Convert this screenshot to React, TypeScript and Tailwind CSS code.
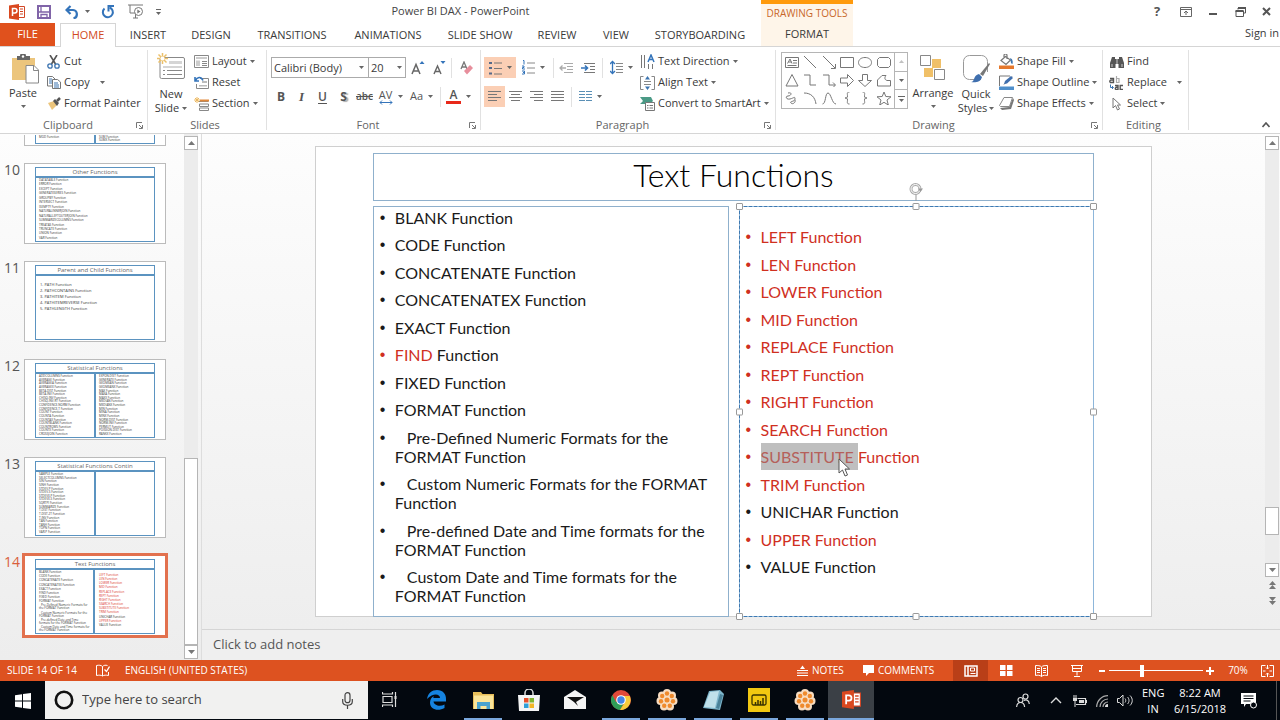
import React from "react";

type Kids = { children?: React.ReactNode };

function Icon({ w, h, vb, children, className = "" }: Kids & { w: number; h: number; vb?: string; className?: string }) {
  return (
    <svg width={w} height={h} viewBox={vb ?? `0 0 ${w} ${h}`} fill="none" aria-hidden="true" className={`block shrink-0 ${className}`}>
      {children}
    </svg>
  );
}

const Caret = ({ className = "" }: { className?: string }) => (
  <Icon w={5} h={3} className={className}>
    <path d="M0 0h5L2.500 3z" fill="#666" />
  </Icon>
);

const Rule = () => <span className="h-5 w-px shrink-0 bg-[#e1e1e1]" />;

/* ---------- title bar and tabs ---------- */

const PptMark = ({ size }: { size: number }) => (
  <Icon w={size} h={size} vb="0 0 16 16">
    <path d="M9 2.500h6.500v11H9z" fill="#fff" stroke="#d24726" />
    <path d="M11 5h3M11 7.500h3M11 10h3" stroke="#d24726" strokeWidth="1.200" />
    <path d="M0 1.500 10 0v16L0 14.500z" fill="#d9481f" />
    <path d="M3.500 12V4.500h2.300a2.200 2.200 0 0 1 0 4.400H3.500" stroke="#fff" strokeWidth="1.500" />
  </Icon>
);

function TitleBar() {
  return (
    <div className="flex h-[23px] items-center">
      <div className="flex w-[160px] shrink-0 items-center pl-[9px]">
        <PptMark size={16} />
        <button aria-label="Save" className="ml-3">
          <Icon w={14} h={14}>
            <path d="M1 1h12v12H1z" stroke="#8064a8" strokeWidth="2" />
            <path d="M1 7h12M4 13V9.500h6V13M4 1v6" stroke="#8064a8" strokeWidth="1.300" />
          </Icon>
        </button>
        <button aria-label="Undo" className="ml-[14px]">
          <Icon w={14} h={14}>
            <path d="M5.500 1 1.500 5l4 4M2 5h6a4.200 4.200 0 0 1 .5 8.300" stroke="#3474ba" strokeWidth="2.200" />
          </Icon>
        </button>
        <Caret className="ml-[6px]" />
        <button aria-label="Repeat" className="ml-[11px]">
          <Icon w={14} h={14}>
            <path d="M8.500 2.500A5 5 0 1 1 3.500 3.500" stroke="#3474ba" strokeWidth="2" />
            <path d="M7.500 6.500V1H13" stroke="#3474ba" strokeWidth="2" />
          </Icon>
        </button>
        <button aria-label="Start slide show" className="ml-[13px]">
          <Icon w={16} h={15}>
            <path d="M0 1h15M2 1v8h6M5 14h5M7.500 9v5" stroke="#777" />
            <circle cx="10.500" cy="7.500" r="4" stroke="#777" fill="#fff" />
            <path d="M9.300 5.500v4l3.200-2z" fill="#777" />
          </Icon>
        </button>
        <Icon w={5} h={6} className="ml-3">
          <path d="M0 .5h5" stroke="#666" />
          <path d="M0 3h5L2.500 6z" fill="#666" />
        </Icon>
      </div>
      <h1 className="min-w-0 flex-1 text-center text-[11px] text-[#444]">Power BI DAX - PowerPoint</h1>
      <div className="mr-[298px] flex h-full w-[92px] shrink-0 items-center justify-center border-t-4 border-[#ff9a0c] bg-[#fef5e9] text-[10px] whitespace-nowrap text-[#c8672a]">
        DRAWING TOOLS
      </div>
      <div className="flex w-[129px] shrink-0 items-center justify-between pr-[9px]">
        <button aria-label="Help" className="w-3 text-[13px] font-bold text-[#555]">?</button>
        <button aria-label="Ribbon display options">
          <Icon w={12} h={10}>
            <path d="M.5.5h11v9H.5zM.5 2.500h11" stroke="#666" />
            <path d="M6 8V4M4 6l2-2 2 2" stroke="#666" />
          </Icon>
        </button>
        <button aria-label="Minimize">
          <Icon w={10} h={10}>
            <path d="M1 7h8" stroke="#555" strokeWidth="2" />
          </Icon>
        </button>
        <button aria-label="Restore">
          <Icon w={11} h={10}>
            <path d="M3 2.500V1h7.500v5H9M1 4h7.500v5.500H1z" stroke="#555" />
            <path d="M3 1h8M.5 4h8" stroke="#555" strokeWidth="2" />
          </Icon>
        </button>
        <button aria-label="Close">
          <Icon w={9} h={9}>
            <path d="m1 1 7 7M8 1 1 8" stroke="#555" strokeWidth="2" />
          </Icon>
        </button>
      </div>
    </div>
  );
}

const TABS = [
  { name: "INSERT", w: "w-16" },
  { name: "DESIGN", w: "w-[62px]" },
  { name: "TRANSITIONS", w: "w-[100px]" },
  { name: "ANIMATIONS", w: "w-[92px]" },
  { name: "SLIDE SHOW", w: "w-[92px]" },
  { name: "REVIEW", w: "w-[62px]" },
  { name: "VIEW", w: "w-14" },
  { name: "STORYBOARDING", w: "w-[112px]" },
];

function Tabs() {
  return (
    <nav className="flex h-6 border-b border-[#d5d5d5] text-[11px] text-[#3a3a3a]">
      <button className="h-[23px] w-[55px] bg-[#e0511d] text-white">FILE</button>
      <button className="ml-[5px] h-6 w-14 border border-b-0 border-[#d5d5d5] bg-white text-[#d24a22]">HOME</button>
      {TABS.map((t) => (
        <button key={t.name} className={`h-6 ${t.w}`}>{t.name}</button>
      ))}
      <button className="ml-[5px] h-[23px] w-[92px] bg-[#fef5e9]">FORMAT</button>
      <a href="#sign-in" className="ml-auto pr-px leading-[20px] whitespace-nowrap">Sign in</a>
    </nav>
  );
}

/* ---------- ribbon ---------- */

function Group({ label, w, launcher, children }: Kids & { label: string; w: string; launcher?: boolean }) {
  return (
    <section aria-label={label} className={`flex h-full shrink-0 ${w}`}>
      <div className="flex min-w-0 flex-1 flex-col">
        <div className="flex h-[71px] pt-1">{children}</div>
        <div className="flex h-[15px] items-center pr-1 text-[11px] text-[#666]">
          <span className="flex-1 text-center">{label}</span>
          {launcher && (
            <Icon w={7} h={7}>
              <path d="M.5 6V.5H6M3 3l3 3M6.500 3v3.500H3" stroke="#777" />
            </Icon>
          )}
        </div>
      </div>
      <span className="my-[3px] w-px bg-[#e1e1e1]" />
    </section>
  );
}

function Row({ icon, label, caret, far }: { icon: React.ReactNode; label: string; caret?: boolean; far?: boolean }) {
  return (
    <button className="flex h-[21px] items-center gap-[3px] whitespace-nowrap">
      <span className="flex w-[15px] justify-center">{icon}</span>
      <span>{label}</span>
      {caret && <Caret className={far ? "ml-[7px]" : ""} />}
    </button>
  );
}

function Clipboard() {
  return (
    <Group label="Clipboard" w="w-[148px]" launcher>
      <button className="flex w-[46px] flex-col items-center">
        <Icon w={27} h={30} className="mt-[3px] ml-1">
          <path d="M0 4h23v22H0z" fill="#ecc57c" />
          <path d="M5 2h3a3 3 0 0 1 6 0h4v4H5z" fill="#666" />
          <circle cx="11" cy="2.500" r="1.200" fill="#fff" />
          <path d="M14 11.500h8l4.500 4.500v13H14z" fill="#fff" stroke="#888" />
          <path d="M21.500 11.500v5h5" stroke="#888" />
        </Icon>
        <span className="mt-px leading-[16px]">Paste</span>
        <Caret className="mt-1" />
      </button>
      <div className="flex flex-col">
        <Row label="Cut" icon={
          <Icon w={13} h={14}>
            <path d="m3 0 5.500 9M10 0 4.500 9" stroke="#555" strokeWidth="1.600" />
            <circle cx="3" cy="11" r="2.200" stroke="#3c74b0" strokeWidth="1.300" />
            <circle cx="10" cy="11" r="2.200" stroke="#3c74b0" strokeWidth="1.300" />
          </Icon>
        } />
        <Row label="Copy" caret far icon={
          <Icon w={14} h={13}>
            <path d="M.5.5h5L8 3v7H.5z" fill="#fff" stroke="#777" />
            <path d="M2 3h3M2 5h3M2 7h3" stroke="#3c74b0" />
            <path d="M5.500 3.500h5L13.500 6v6.500h-8z" fill="#fff" stroke="#777" />
            <path d="M7 7h4M7 9h5M7 11h5" stroke="#3c74b0" />
          </Icon>
        } />
        <Row label="Format Painter" icon={
          <Icon w={14} h={13}>
            <path d="m1 6 6-2 3 4-5 5z" fill="#ecc57c" />
            <path d="m6 4 2-2 4 4-2 3z" fill="#555" />
            <path d="m10 4 3-3" stroke="#555" strokeWidth="2.500" />
          </Icon>
        } />
      </div>
    </Group>
  );
}

function Slides() {
  return (
    <Group label="Slides" w="w-[119px]">
      <button className="flex w-[46px] flex-col items-center">
        <Icon w={28} h={26} className="mt-[2px]">
          <rect x="3" y="4.500" width="24.500" height="21" rx="1.500" fill="#fff" stroke="#888" />
          <path d="M12 8h13v3H12zM6 13h19v2H6z" fill="#d5d5d5" />
          <path d="M6 17.500h2M10 17.500h15M6 21.500h2M10 21.500h15" stroke="#888" />
          <path d="M5.500 0v11M0 5.500h11M1.500 1.500l8 8M9.500 1.500l-8 8" stroke="#ecc06a" strokeWidth="1.500" />
          <circle cx="5.500" cy="5.500" r="2" fill="#fff" />
        </Icon>
        <span className="mt-2 leading-[14px]">New</span>
        <span className="flex items-center gap-[3px] leading-[14px]">Slide <Caret /></span>
      </button>
      <div className="flex flex-col">
        <Row label="Layout" caret icon={
          <Icon w={15} h={13}>
            <path d="M.5.5h14v12H.5z" stroke="#888" />
            <path d="M2 2h11v2H2zM2 5.500h4v5.500H2z" fill="#ccc" />
            <path d="M8 6.500h5M8 8.500h5M8 10.500h5" stroke="#888" />
          </Icon>
        } />
        <Row label="Reset" icon={
          <Icon w={15} h={13}>
            <path d="M6 2.500h8.500v10h-12V8" stroke="#888" />
            <path d="M8 5h5v2H8zM5 9h8v1.500H5z" fill="#bbb" />
            <path d="M1 1v4h4M1.500 4.500C3 1 7 0 9 4.500" stroke="#3474ba" strokeWidth="1.600" />
          </Icon>
        } />
        <Row label="Section" caret icon={
          <Icon w={15} h={14}>
            <path d="M5 4.500h9.500M5.500 7h9v2.500h-9zM5.500 11h9v2.500h-9z" stroke="#888" />
            <path d="M6 3.500h9" stroke="#e0883a" strokeWidth="2" />
            <path d="M3 0v6M0 3h6M1 1l4 4M5 1 1 5" stroke="#ecb860" />
          </Icon>
        } />
      </div>
    </Group>
  );
}

function Cell({ w = "w-[21px]", on, label, children }: Kids & { w?: string; on?: boolean; label: string }) {
  return (
    <button aria-label={label} className={`flex h-[21px] shrink-0 items-center justify-center gap-[5px] ${w} ${on ? "bg-[#fbcfb5]" : ""}`}>
      {children}
    </button>
  );
}

function FontGroup() {
  return (
    <Group label="Font" w="w-[214px]" launcher>
      <div className="flex flex-col gap-2 pt-[6px] pl-1">
        <div className="flex h-[21px] items-center">
          <span className="relative flex items-center">
            <select aria-label="Font name" className="h-[21px] w-[98px] appearance-none border border-[#ababab] bg-white pl-[2px] text-[11px] leading-[16px]">
              <option>Calibri (Body)</option>
            </select>
            <Caret className="pointer-events-none absolute right-[5px]" />
          </span>
          <span className="relative -ml-px flex items-center">
            <select aria-label="Font size" className="h-[21px] w-[38px] appearance-none border border-[#ababab] bg-white pl-[2px] text-[11px] leading-[16px]">
              <option>20</option>
            </select>
            <Caret className="pointer-events-none absolute right-1" />
          </span>
          <Cell label="Increase font size" w="w-6">
            <Icon w={14} h={14}>
              <path d="M1 13 5 3.500 9 13M2.500 10h5" stroke="#666" strokeWidth="1.500" />
              <path d="M8.500 3h5L11 0z" fill="#3474ba" />
            </Icon>
          </Cell>
          <Cell label="Decrease font size" w="w-[18px]">
            <Icon w={13} h={14}>
              <path d="M1 13 4.500 5 8 13M2.500 10.500h4" stroke="#666" strokeWidth="1.400" />
              <path d="M7.500 0h5L10 3z" fill="#3474ba" />
            </Icon>
          </Cell>
          <span className="w-[3px]" />
          <Rule />
          <Cell label="Clear formatting" w="w-[29px]">
            <Icon w={13} h={14}>
              <path d="M1 8 4 1l3 7M2 6h4" stroke="#777" strokeWidth="1.300" />
              <path d="m4 10 6-6 3 3-6 6.500z" fill="#e78e9c" />
            </Icon>
          </Cell>
        </div>
        <div className="flex h-[21px] items-center text-[12px] text-[#555]">
          <Cell label="Bold" w="w-5"><b>B</b></Cell>
          <Cell label="Italic"><i className="font-['Liberation_Serif',serif] text-[13px] font-bold">I</i></Cell>
          <Cell label="Underline"><b className="font-semibold underline underline-offset-2">U</b></Cell>
          <Cell label="Text shadow"><b className="text-shadow-[2px_1px_1px_#aaa]">S</b></Cell>
          <Cell label="Strikethrough"><b className="text-[10px] font-semibold line-through">abc</b></Cell>
          <Cell label="Character spacing" w="w-[31px]">
            <span className="flex flex-col items-center">
              <span className="text-[11px] leading-[11px]">AV</span>
              <Icon w={14} h={5}>
                <path d="M1 2.500h12M3 .5l-2 2 2 2M11 .5l2 2-2 2" stroke="#3474ba" />
              </Icon>
            </span>
            <Caret />
          </Cell>
          <Cell label="Change case" w="w-[31px]"><span className="text-[11px]">Aa</span><Caret /></Cell>
          <span className="w-[3px]" />
          <Rule />
          <Cell label="Font color" w="w-[35px]">
            <span className="flex flex-col items-center">
              <span className="text-[12px] leading-[12px] font-semibold">A</span>
              <span className="h-[3px] w-[15px] bg-[#e8291a]" />
            </span>
            <Caret />
          </Cell>
        </div>
      </div>
    </Group>
  );
}

const Lines = ({ d }: { d: string }) => (
  <Icon w={13} h={11}>
    <path d={d} stroke="#777" />
  </Icon>
);

function Paragraph() {
  return (
    <Group label="Paragraph" w="w-[295px]" launcher>
      <div className="flex w-[159px] shrink-0 flex-col gap-2 pt-[6px] pl-[3px]">
        <div className="flex h-[21px] items-center">
          <Cell label="Bullets" w="w-8" on>
            <Icon w={13} h={14}>
              <path d="M5 2h8M5 7.500h8M5 13h8" stroke="#777" />
              <path d="M0 1h3v2H0zM0 6h3v2H0zM0 11.500h3v2H0z" fill="#566a8a" />
            </Icon>
            <Caret />
          </Cell>
          <Cell label="Numbering" w="w-[34px]">
            <Icon w={13} h={15}>
              <path d="M5 3h8M5 8h8M5 13h8" stroke="#888" />
              <path d="M1 .5h1v4M0 6h2v1.500H.5V9H3M0 11h2.500v3H0M1 12.500h1" stroke="#3474ba" />
            </Icon>
            <Caret />
          </Cell>
          <span className="w-[3px]" />
          <Rule />
          <Cell label="Decrease list level" w="w-6">
            <Icon w={14} h={10}>
              <path d="M5 .5h9M8 3.500h6M8 6.500h6M5 9.500h9" stroke="#aaa" />
              <path d="M7 5H1M3.500 2.500 1 5l2.500 2.500" stroke="#aaa" strokeWidth="1.300" />
            </Icon>
          </Cell>
          <Cell label="Increase list level" w="w-5">
            <Icon w={14} h={10}>
              <path d="M3 .5h11M9 3.500h5M9 6.500h5M3 9.500h11" stroke="#777" />
              <path d="M0 5h6M4 2.500 6.500 5 4 7.500" stroke="#3474ba" strokeWidth="1.600" />
            </Icon>
          </Cell>
          <span className="w-1" />
          <Rule />
          <Cell label="Line spacing" w="w-9">
            <Icon w={13} h={15}>
              <path d="M2.500 1v13M0 4l2.500-2.500L5 4M0 11l2.500 2.500L5 11" stroke="#3474ba" strokeWidth="1.300" />
              <path d="M6 3.500h7M6 6.500h7M6 9.500h7M6 12.500h7" stroke="#888" />
            </Icon>
            <Caret />
          </Cell>
        </div>
        <div className="flex h-[21px] items-center">
          <Cell label="Align left" on><Lines d="M0 .5h13M0 3.500h9M0 6.500h13M0 9.500h9" /></Cell>
          <Cell label="Center"><Lines d="M0 .5h13M2 3.500h9M0 6.500h13M2 9.500h9" /></Cell>
          <Cell label="Align right"><Lines d="M0 .5h13M4 3.500h9M0 6.500h13M4 9.500h9" /></Cell>
          <Cell label="Justify"><Lines d="M0 .5h13M0 3.500h13M0 6.500h13M0 9.500h13" /></Cell>
          <span className="w-[3px]" />
          <Rule />
          <Cell label="Columns" w="w-9">
            <Icon w={13} h={11}>
              <path d="M0 .5h6M0 3.500h6M0 6.500h6M0 9.500h6M7 .5h6M7 3.500h6M7 6.500h6M7 9.500h6" stroke="#5a8fb5" />
            </Icon>
            <Caret />
          </Cell>
        </div>
      </div>
      <div className="flex flex-col">
        <Row label="Text Direction" caret icon={
          <Icon w={15} h={15}>
            <path d="M1.500 1v13M4.500 1v13M8.500 10v5M12.500 10v5" stroke="#777" />
            <path d="m8 8 3-7 3 7M9 5.500h4" stroke="#3474ba" strokeWidth="1.500" />
          </Icon>
        } />
        <Row label="Align Text" caret icon={
          <Icon w={15} h={14}>
            <path d="M3.500.5h-3v13h3M11.500.5h3v13h-3M4 5.500h7M4 8.500h7" stroke="#888" />
            <path d="M5 3.500h5L7.500 0zM5 10.500h5L7.500 14z" fill="#3c74b0" />
          </Icon>
        } />
        <Row label="Convert to SmartArt" caret icon={
          <Icon w={15} h={14}>
            <path d="M0 0h11l2 4-3 3H0l3-3z" fill="#4b9a86" />
            <path d="M5.500 5.500h9v8h-9z" fill="#fff" stroke="#777" />
            <path d="M7 8.500h1.500M9.500 8.500H13M7 11h1.500M9.500 11H13" stroke="#777" />
          </Icon>
        } />
      </div>
    </Group>
  );
}

const SHAPES = [
  "M.5 1.500h13v10H.5zM8 4.500h4M8 7h4M2.500 9.500h9M2.500 7.500 5 3l2 4.500M3.500 6h3",
  "m1 0 12 12",
  "m1 0 12 12M13.500 8v4.500H9",
  "M.5 1.500h13v10H.5z",
  "M7 1.500c4 0 6.500 2.300 6.500 5s-2.500 5-6.500 5S.5 9.200.5 6.500 3 1.500 7 1.500z",
  "M2.500 1.500h9l2 2v6l-2 2h-9l-2-2v-6z",
  "M7 .5 13 12H1z",
  "M1 1h6v10h6",
  "M1 1h6v10h6M11 8.500l2.500 2.500-2.500 2.500",
  "M.5 4h7V.5L13.500 6.500l-6 6V9h-7z",
  "M4.500.5h5v6h4l-6.500 6-6.500-6h4z",
  "M.5 12V6L5 1.500h4C7 4 8 6 10 6.500h3.500V12z",
  "M3 1C8 0 6 4 3 4s-2 4 2 3 5-3 5 0-6 2-4 4 5-1 4-3",
  "M1 1c7 0 11 4 12 11",
  "M.5 12C4 12 3 1 6 1s4 11 8 11",
  "M9.500 0c-3 0-2 2-2 4S6.500 6 5 6c1.500 0 2.500 0 2.500 2s-1 4 2 4",
  "M4.500 0c3 0 2 2 2 4S7.500 6 9 6c-1.500 0-2.500 0-2.500 2s1 4-2 4",
  "m7 0 1.800 4.500 5.200.3-4 3.200 1.300 5L7 10.300 2.700 13 4 8 0 4.800l5.200-.3z",
];

function Drawing() {
  return (
    <Group label="Drawing" w="w-[327px]" launcher>
      <div className="mt-px ml-[5px] flex h-[57px] w-[127px] shrink-0 border border-[#b5b5b5]">
        <div className="grid flex-1 grid-cols-6 place-items-center px-px">
          {SHAPES.map((d) => (
            <Icon key={d} w={14} h={13}>
              <path d={d} stroke="#777" />
            </Icon>
          ))}
        </div>
        <div className="flex w-[13px] flex-col border-l border-[#b5b5b5]">
          <button aria-label="Scroll up" className="flex flex-1 items-center justify-center border-b border-[#b5b5b5]">
            <Caret className="rotate-180 opacity-40" />
          </button>
          <button aria-label="Scroll down" className="flex flex-1 items-center justify-center border-b border-[#b5b5b5]"><Caret /></button>
          <button aria-label="More shapes" className="flex flex-1 items-center justify-center">
            <Icon w={7} h={6}>
              <path d="M0 .5h7" stroke="#666" />
              <path d="M1 3h5L3.500 6z" fill="#666" />
            </Icon>
          </button>
        </div>
      </div>
      <button className="flex w-[50px] flex-col items-center">
        <Icon w={26} h={26} className="mt-1">
          <path d="M12 4h9v9h-9zM4 13h9v9H4z" fill="#f0c068" />
          <path d="M.5.5h10v10H.5zM14.500 14.500h10v10h-10z" fill="#fff" stroke="#888" />
        </Icon>
        <span className="mt-1 leading-[16px]">Arrange</span>
        <Caret className="mt-1" />
      </button>
      <button className="flex w-[36px] flex-col items-center">
        <Icon w={27} h={29} className="mt-1">
          <path d="M18 24.500H6.500a6 6 0 0 1-6-6v-12a6 6 0 0 1 6-6h12a6 6 0 0 1 6 6V17" stroke="#999" />
          <path d="m26 8-9 11 3 2 7-12z" fill="#777" />
          <path d="M8 27c4 0 2-7 8-8l3 3c-1 5-7 6-11 5z" fill="#3f6fae" />
        </Icon>
        <span className="mt-[3px] leading-[14px]">Quick</span>
        <span className="flex items-center gap-[2px] leading-[14px]">Styles <Caret /></span>
      </button>
      <div className="ml-[5px] flex flex-col">
        <Row label="Shape Fill" caret icon={
          <Icon w={15} h={15}>
            <path d="m2 6.500 4.500-4 5 3.500-4.500 4.500zM5 5V1.500a1.500 1.500 0 0 1 3 0V5" stroke="#777" strokeWidth="1.200" />
            <path d="M11 4c3 1 3 4 2.500 6-2 0-1.500-3-2.500-6z" fill="#3c74b0" />
            <path d="M0 11.500h15V15H0z" fill="#e5782c" />
          </Icon>
        } />
        <Row label="Shape Outline" caret icon={
          <Icon w={15} h={15}>
            <path d="M11 1H.5v10M5 9.500 13 1.500" stroke="#777" />
            <path d="m5 9 1-3 6-5 2 2-6 5.500z" fill="#3f6fae" />
            <path d="M0 11.500h15V15H0z" fill="#4f8fcb" />
          </Icon>
        } />
        <Row label="Shape Effects" caret icon={
          <Icon w={15} h={13}>
            <path d="m3 13 9-1 3-9-1-2-4 9-9 1z" fill="#777" />
            <path d="M5 .5h8.500l-3 9h-9l-1-1z" fill="#fff" stroke="#888" />
          </Icon>
        } />
      </div>
    </Group>
  );
}

function Editing() {
  return (
    <Group label="Editing" w="w-[86px]">
      <div className="flex flex-col pl-[6px]">
        <Row label="Find" icon={
          <Icon w={14} h={12}>
            <path d="M2 1h3v2h4V1h3l2 6v5H8.500V8h-3v4H0V7z" fill="#555" />
            <path d="M7 3v5M2 8v3M12 8v3" stroke="#ccc" />
          </Icon>
        } />
        <Row label="Replace" caret far icon={
          <Icon w={15} h={14}>
            <path d="M1 2.500h3.500v4H2a1.200 1.200 0 0 1 0-2.400h2.500" stroke="#555" strokeWidth="1.400" />
            <path d="M7.500 0v6.500H10v-4H7.500" stroke="#aaa" strokeWidth="1.200" />
            <path d="M6 9.500h3v4H7a1.200 1.200 0 0 1 0-2.200h2M14 9.500h-2.800v4H14" stroke="#555" strokeWidth="1.400" />
            <path d="M1.500 8.500v3H4M3 10l1.500 1.500L3 13" stroke="#3c74b0" />
          </Icon>
        } />
        <Row label="Select" caret icon={
          <Icon w={9} h={14}>
            <path d="M1 1v10l2.500-2.500L5.500 13l2-1-2-4H8.500z" fill="#fff" stroke="#777" />
          </Icon>
        } />
      </div>
    </Group>
  );
}

function Ribbon() {
  return (
    <div className="flex h-[87px] border-b border-[#d5d5d5] text-[11px] text-[#3a3a3a]">
      <Clipboard />
      <Slides />
      <FontGroup />
      <Paragraph />
      <Drawing />
      <Editing />
      <button aria-label="Collapse the ribbon" className="mt-auto mr-[10px] mb-[5px] ml-auto">
        <Icon w={8} h={6}>
          <path d="m.5 5 3.500-4 3.500 4" stroke="#555" strokeWidth="1.600" />
        </Icon>
      </button>
    </div>
  );
}

/* ---------- slides ---------- */

type Item = { text: string; red?: boolean; find?: boolean; indent?: boolean };

const black = (names: string): Item[] => names.split(" ").map((n) => ({ text: `${n} Function` }));
const red = (names: string): Item[] => names.split(" ").map((n) => ({ text: `${n} Function`, red: true }));

const LEFT: Item[] = [
  ...black("BLANK CODE CONCATENATE CONCATENATEX EXACT"),
  { text: "FIND Function", find: true },
  ...black("FIXED FORMAT"),
  { text: "Pre-Defined Numeric Formats for the FORMAT Function", indent: true },
  { text: "Custom Numeric Formats for the FORMAT Function", indent: true },
  { text: "Pre-defined Date and Time formats for the FORMAT Function", indent: true },
  { text: "Custom Date and Time formats for the FORMAT Function", indent: true },
];

const RIGHT: Item[] = [
  ...red("LEFT LEN LOWER MID REPLACE REPT RIGHT SEARCH SUBSTITUTE TRIM"),
  ...black("UNICHAR"),
  ...red("UPPER"),
  ...black("VALUE"),
];

type ListStyle = "full" | "loose" | "inset";

const LIST_STYLES: Record<ListStyle, string> = {
  full: "justify-between py-px px-[3px] text-[3px] leading-[3px]",
  loose: "list-inside list-decimal gap-[2px] pt-[7px] px-1 text-[4px] leading-[4px]",
  inset: "justify-between pt-1 pb-[6px] px-1 text-[3px] leading-[3px]",
};

function ThumbList({ items, kind = "full", second }: { items: Item[]; kind?: ListStyle; second?: boolean }) {
  return (
    <ul className={`flex min-w-0 flex-1 flex-col border border-t-0 border-[#5b93c0] text-[#333] ${second ? "border-l" : ""} ${LIST_STYLES[kind]}`}>
      {items.map((it, i) => (
        <li key={i} className={`${it.red ? "text-[#d9301f]" : ""} ${it.indent ? "indent-[2px]" : ""} ${kind === "loose" ? "list-item" : ""}`}>{it.text}</li>
      ))}
    </ul>
  );
}

type Thumb = { n: number; title: string; left: Item[]; right?: Item[]; leftKind?: ListStyle; rightKind?: ListStyle };

const THUMBS: Thumb[] = [
  { n: 10, title: "Other Functions", left: black("DATATABLE ERROR EXCEPT GENERATESERIES GROUPBY INTERSECT ISEMPTY NATURALINNERJOIN NATURALLEFTOUTERJOIN SUMMARIZECOLUMNS TREATAS TRUNCATE UNION VAR") },
  { n: 11, title: "Parent and Child Functions", left: black("PATH PATHCONTAINS PATHITEM PATHITEMREVERSE PATHLENGTH"), leftKind: "loose" },
  {
    n: 12,
    title: "Statistical Functions",
    left: black("ADDCOLUMNS AVERAGE AVERAGEA AVERAGEX BETA.DIST BETA.INV CHISQ.INV CHISQ.INV.RT CONFIDENCE.NORM CONFIDENCE.T COUNT COUNTA COUNTAX COUNTBLANK COUNTROWS COUNTX CROSSJOIN"),
    right: black("EXPON.DIST GENERATE GEOMEAN GEOMEANX MAX MAXA MAXX MEDIAN MEDIANX MIN MINA MINX NORM.DIST NORM.INV PERMUT POISSON.DIST RANKX"),
  },
  {
    n: 13,
    title: "Statistical Functions Contin",
    left: black("SAMPLE SELECTCOLUMNS SIN SINH STDEV.P STDEV.S STDEVX.P STDEVX.S SQRTPI SUMMARIZE T.DIST T.DIST.2T T.INV TAN TANH TOPN VAR.P"),
    right: [],
  },
  { n: 14, title: "Text Functions", left: LEFT, right: RIGHT, rightKind: "inset" },
];

function ThumbView({ t }: { t: Thumb }) {
  const active = t.n === 14;
  return (
    <li className="flex h-[81px] shrink-0 items-start">
      <span className={`w-6 pl-1 text-[14px] leading-[14px] ${active ? "text-[#d95f3c]" : "text-[#555]"}`}>{t.n}</span>
      <button
        aria-label={`Slide ${t.n}: ${t.title}`}
        className={`flex h-[81px] w-[142px] flex-col border bg-white px-[10px] pt-[3px] pb-px text-left ${active ? "border-[#e2714e] outline-2 outline-[#e2714e]" : "border-[#bbb]"}`}
      >
        <span className="block h-[11px] w-full border border-b-2 border-[#5b93c0] text-center text-[6px] leading-[8px] text-[#666]">{t.title}</span>
        <span className="flex min-h-0 w-full flex-1">
          <ThumbList items={t.left} kind={t.leftKind} />
          {t.right && <ThumbList items={t.right} kind={t.rightKind} second />}
        </span>
      </button>
    </li>
  );
}

const Arrow = ({ up, double }: { up?: boolean; double?: boolean }) => (
  <Icon w={7} h={double ? 8 : 4} className={up ? "rotate-180" : ""}>
    <path d={double ? "M0 0h7L3.500 4zM0 4h7L3.500 8z" : "M0 0h7L3.500 4z"} fill="#777" />
  </Icon>
);

function ScrollButton({ up }: { up?: boolean }) {
  return (
    <button aria-label={up ? "Scroll up" : "Scroll down"} className="flex h-[14px] w-full shrink-0 items-center justify-center border border-[#b5b5b5] bg-white">
      <Arrow up={up} />
    </button>
  );
}

function Panel() {
  return (
    <aside className="flex w-[202px] shrink-0 border-r border-[#ddd]">
      <ol className="flex min-h-0 w-[184px] flex-col justify-end gap-[17px] pb-6">
        <li className="flex h-[11px] pl-6">
          <button aria-label="Slide 9" className="flex w-[142px] border border-t-0 border-[#bbb] bg-white px-[10px] pb-px text-left">
            <ThumbList items={black("MOD")} />
            <ThumbList items={black("SUM SUMX")} second />
          </button>
        </li>
        {THUMBS.map((t) => (
          <ThumbView key={t.n} t={t} />
        ))}
      </ol>
      <div className="flex w-[14px] flex-col bg-[#ececec] pt-[2px] pb-px">
        <ScrollButton up />
        <span className="flex-1" />
        <span className="h-[187px] border border-[#b5b5b5] bg-white" />
        <ScrollButton />
      </div>
    </aside>
  );
}

function Bullets({ items, pad }: { items: Item[]; pad: string }) {
  return (
    <ul className={`flex h-full flex-col justify-between text-[16px] leading-[19px] ${pad}`}>
      {items.map((it) => (
        <li key={it.text} className={`flex ${it.red ? "text-[#d0301f]" : "text-[#1a1a1a]"}`}>
          <span className={`w-[15px] shrink-0 font-['Liberation_Sans',sans-serif] ${it.find ? "text-[#d0301f]" : ""}`}>•</span>
          {it.find ? (
            <span><span className="text-[#d0301f]">FIND</span> Function</span>
          ) : it.text.startsWith("SUBSTITUTE") ? (
            <span className="relative">
              <span className="bg-[#bfbfbf] py-1 whitespace-pre text-[#b5605a]">SUBSTITUTE </span>Function
              <Icon w={12} h={19} className="absolute top-[11px] left-[77px]">
                <path d="M1 1v14l3.500-3 2.500 6 2.500-1L7 11h4.500z" fill="#fff" stroke="#555" />
              </Icon>
            </span>
          ) : (
            <span className={it.indent ? "indent-3" : ""}>{it.text}</span>
          )}
        </li>
      ))}
    </ul>
  );
}

const HANDLES = [
  "-top-1 -left-1",
  "-top-1 left-1/2 -translate-x-1/2",
  "-top-1 -right-1",
  "top-1/2 -left-1 -translate-y-1/2",
  "top-1/2 -right-1 -translate-y-1/2",
  "-bottom-1 -left-1",
  "-bottom-1 left-1/2 -translate-x-1/2",
  "-bottom-1 -right-1",
];

function Slide() {
  return (
    <article className="flex aspect-video h-full flex-col border border-[#cfcfcf] bg-white px-[57px] pt-[6px] font-['Lato',sans-serif]">
      <h2 className="flex h-12 shrink-0 items-center justify-center border border-[#8fb0cc] pb-1 text-[32px] font-light text-black">Text Functions</h2>
      <div className="mt-[5px] -mb-px flex min-h-0 flex-1 gap-[10px]">
        <div className="flex-1 border border-[#8fb0cc]">
          <Bullets items={LEFT} pad="pt-px pb-[11px] pl-[6px] pr-2" />
        </div>
        <div className="relative flex-1 border border-[#8db6da]">
          <span className="pointer-events-none absolute -inset-px border border-r-0 border-dashed border-[#3d78b0]" />
          <Bullets items={RIGHT} pad="pt-5 pb-10 pl-[6px]" />
          {HANDLES.map((p) => (
            <span key={p} className={`absolute size-[7px] rounded-[1px] border border-[#999] bg-white ${p}`} />
          ))}
          <Icon w={14} h={18} className="absolute -top-6 left-1/2 -translate-x-1/2">
            <path d="M7 11v7" stroke="#999" />
            <circle cx="6.500" cy="6" r="4.500" stroke="#aaa" strokeWidth="3" />
            <circle cx="6.500" cy="6" r="4.500" stroke="#fff" />
            <path d="M9 5.500h5L11.500 9z" fill="#999" />
          </Icon>
        </div>
      </div>
    </article>
  );
}

function Workspace() {
  return (
    <main className="flex min-w-0 flex-1 flex-col">
      <div className="flex min-h-0 flex-1">
        <div className="flex min-w-0 flex-1 justify-center pt-3 pb-3">
          <Slide />
        </div>
        <div className="mr-px flex w-[14px] flex-col items-center pt-[2px]">
          <ScrollButton up />
          <span className="w-full flex-1 bg-[#ececec]" />
          <span className="h-7 w-full shrink-0 border border-[#b5b5b5] bg-white" />
          <span className="h-[28px] w-full shrink-0 bg-[#ececec]" />
          <ScrollButton />
          <button aria-label="Previous slide" className="mt-1"><Arrow up double /></button>
          <button aria-label="Next slide" className="mt-2 mb-[24px]"><Arrow double /></button>
        </div>
      </div>
      <div className="flex h-[31px] items-center border-t border-[#d5d5d5] bg-[#efefef] pl-[11px]">
        <input aria-label="Notes" placeholder="Click to add notes" className="w-full bg-transparent text-[13px] outline-none placeholder:text-[#555]" />
      </div>
    </main>
  );
}

/* ---------- status bar ---------- */

function StatusBar() {
  return (
    <footer className="flex h-[21px] shrink-0 items-center bg-[#dd5220] text-[10px] whitespace-nowrap text-white">
      <span className="w-[96px] pl-[7px]">SLIDE 14 OF 14</span>
      <Icon w={14} h={13} className="mr-[15px]">
        <path d="M6.500 2.500v9.500C5 11 3 11 .5 11.500v-10C3 1 5 1 6.500 2.500zm0 0C8 1 9.500 1 11.500 1.500M6.500 12c1.500-1 3.500-1 6-.5V8" stroke="#fff" />
        <path d="m8.500 5.500 2 2 3-5" stroke="#fff" strokeWidth="1.300" />
      </Icon>
      <span>ENGLISH (UNITED STATES)</span>
      <div className="ml-auto flex h-full items-center">
        <button className="flex w-[66px] items-center gap-1">
          <Icon w={11} h={11}>
            <path d="M3 4h5L5.500.5z" fill="#fff" />
            <path d="M0 5.500h11M0 8h11M0 10.500h11" stroke="#fff" />
          </Icon>
          NOTES
        </button>
        <button className="flex w-[90px] items-center gap-1">
          <Icon w={11} h={11}>
            <path d="M0 0h11v8H6l-3 3V8H0z" fill="#fff" />
          </Icon>
          COMMENTS
        </button>
        <button aria-label="Normal view" className="flex h-full w-[35px] items-center justify-center bg-[#b93f18]">
          <Icon w={14} h={12}>
            <path d="M1 1h12v10H1zM4 1v10" stroke="#fff" strokeWidth="1.500" />
            <path d="M6.500 3h4v3h-4zM6.500 8.500h5" stroke="#fff" />
          </Icon>
        </button>
        <button aria-label="Slide sorter" className="flex w-9 justify-center">
          <Icon w={13} h={11}>
            <path d="M0 0h5.500v5H0zM7 0h5.500v5H7zM0 6h5.500v5H0zM7 6h5.500v5H7z" fill="#fff" />
          </Icon>
        </button>
        <button aria-label="Reading view" className="flex w-[35px] justify-center">
          <Icon w={13} h={12}>
            <path d="M6.500 2v9.500C5 10 2.500 10 .5 10.500V.5c2 0 5 0 6 1.500 1-1.500 4-1.500 6-1.500v10c-2-.5-4.500-.5-6 1M2 3.500h3M2 5.500h3M2 7.500h3M8 3.500h3M8 5.500h3M8 7.500h3" stroke="#fff" />
          </Icon>
        </button>
        <button aria-label="Slide show" className="flex w-[35px] justify-center">
          <Icon w={12} h={12}>
            <path d="M0 .5h12M1.500 1v5.500h9V1M6 7v3.500M3 11.500h6M1.500 3.500h9" stroke="#fff" />
          </Icon>
        </button>
        <button aria-label="Zoom out" className="flex w-[15px] justify-center">
          <Icon w={6} h={8}><path d="M0 4h6" stroke="#fff" strokeWidth="2" /></Icon>
        </button>
        <input
          type="range"
          aria-label="Zoom"
          min={10}
          max={400}
          defaultValue={146}
          className="h-3 w-[94px] appearance-none bg-[linear-gradient(#fff,#fff)] bg-[length:100%_1px] bg-center bg-no-repeat [&::-webkit-slider-thumb]:h-3 [&::-webkit-slider-thumb]:w-1 [&::-webkit-slider-thumb]:appearance-none [&::-webkit-slider-thumb]:bg-white"
        />
        <button aria-label="Zoom in" className="flex w-[14px] justify-center">
          <Icon w={8} h={8}><path d="M0 4h8M4 0v8" stroke="#fff" strokeWidth="2" /></Icon>
        </button>
        <span className="mr-[2px] w-[42px] text-center">70%</span>
        <button aria-label="Fit to window" className="mr-[6px]">
          <Icon w={13} h={12}>
            <path d="M4.500.5h-4v11h4M8.500.5h4v11h-4M6.500 0v4M5 2.500 6.500 4 8 2.500M6.500 12V8M5 9.500 6.500 8 8 9.500M2 6h2.500M11 6H8.500" stroke="#fff" />
          </Icon>
        </button>
      </div>
    </footer>
  );
}

/* ---------- taskbar ---------- */

function Task({ label, w = "w-[46px]", open, active, children }: Kids & { label: string; w?: string; open?: boolean; active?: boolean }) {
  return (
    <button aria-label={label} className={`flex h-full flex-col items-center ${w} ${active ? "bg-[#3b4046]" : ""}`}>
      <span className="flex flex-1 items-center">{children}</span>
      <span className={`h-[2px] ${active ? "w-full" : "w-[38px]"} ${open ? "bg-[#7aa7dc]" : ""}`} />
    </button>
  );
}

const Flower = () => (
  <Icon w={22} h={22}>
    <g fill="#f7ddc2">
      <circle cx="11" cy="4" r="4" />
      <circle cx="16" cy="6.500" r="4" />
      <circle cx="17.500" cy="12" r="4" />
      <circle cx="14" cy="17.500" r="4" />
      <circle cx="8" cy="17.500" r="4" />
      <circle cx="4.500" cy="12" r="4" />
      <circle cx="6" cy="6.500" r="4" />
      <circle cx="11" cy="11" r="6" />
    </g>
    <g fill="#ef8a2c">
      <circle cx="11" cy="4.500" r="2.200" />
      <circle cx="15.800" cy="7" r="2.200" />
      <circle cx="17" cy="12.200" r="2.200" />
      <circle cx="13.800" cy="16.800" r="2.200" />
      <circle cx="8.200" cy="16.800" r="2.200" />
      <circle cx="5" cy="12.200" r="2.200" />
      <circle cx="6.200" cy="7" r="2.200" />
      <circle cx="11" cy="11" r="2.500" />
    </g>
  </Icon>
);

function Taskbar() {
  return (
    <div className="flex h-[39px] shrink-0 items-stretch bg-[#03080f] text-white">
      <button aria-label="Start" className="flex w-[45px] items-center justify-center">
        <Icon w={16} h={16}>
          <path d="M0 2.200 7 1.200v6.300H0zM8 1l8-1v7.500H8zM0 8.500h7v6.300l-7-1zM8 8.500h8V16l-8-1z" fill="#fff" />
        </Icon>
      </button>
      <label className="mb-px flex w-[323px] items-center bg-[#f1f1f0] pr-[15px] pl-[9px]">
        <Icon w={20} h={20}>
          <circle cx="10" cy="10" r="8.200" stroke="#111" strokeWidth="2.600" />
        </Icon>
        <input aria-label="Search" placeholder="Type here to search" className="ml-2 min-w-0 flex-1 bg-transparent text-[13px] outline-none placeholder:text-[#444]" />
        <Icon w={11} h={17}>
          <rect x="3" y=".7" width="5" height="10" rx="2.500" stroke="#444" strokeWidth="1.200" />
          <path d="M.7 7v2.500c0 5 9.600 5 9.600 0V7M5.500 13v4" stroke="#444" strokeWidth="1.200" />
        </Icon>
      </label>
      <Task label="Task view" w="w-11">
        <Icon w={16} h={15}>
          <path d="M1 4.500h9v6H1zM.5 0v2h10V0M.5 15v-2h10v2M13.500 0v15" stroke="#ddd" strokeWidth="1.200" />
          <path d="M12.500 4h2v3h-2z" fill="#ddd" />
        </Icon>
      </Task>
      <Task label="Edge" w="w-12">
        <Icon w={19} h={20}>
          <path d="M0 9C1 3 5 0 10 0c6 0 9 4 9 9v2.500H6.500c.5 4 6.500 5.500 11 3V18c-6 3.500-14.500 2-14.500-5.500C3 9 5 7 7 6 6 7 6.500 8 6.500 8H13c0-4.500-7-5.500-13 1z" fill="#1583e0" />
        </Icon>
      </Task>
      <Task label="File Explorer" open>
        <Icon w={21} h={18}>
          <path d="M0 1h8l1.500 2H21v15H0z" fill="#e8bf5a" />
          <path d="M1 4.500h19V18H1z" fill="#fbe59a" />
          <path d="M4 18v-7h13v7h-3.500v-3h-6v3z" fill="#4aa3cf" />
        </Icon>
      </Task>
      <Task label="Store">
        <Icon w={22} h={22}>
          <path d="M7 7V4a4 4 0 0 1 8 0v3" stroke="#ddd" strokeWidth="1.500" />
          <path d="M0 6h22l-1 16H1z" fill="#f5f5f5" />
          <path d="M6 9h4.500v4.500H6z" fill="#e8502b" />
          <path d="M11.500 9H16v4.500h-4.500z" fill="#7fb52e" />
          <path d="M6 14.500h4.500V19H6z" fill="#2f9fd8" />
          <path d="M11.500 14.500H16V19h-4.500z" fill="#f2b524" />
        </Icon>
      </Task>
      <Task label="Mail">
        <Icon w={22} h={19}>
          <path d="M0 7 11 0l11 7v12H0z" fill="#f5f5f5" />
          <path d="M3 7h17l-8 5 2 4-4-4z" fill="#111" />
        </Icon>
      </Task>
      <Task label="Chrome" open>
        <Icon w={20} h={20}>
          <circle cx="10" cy="10" r="10" fill="#e04a3a" />
          <path d="M1.300 5A10 10 0 0 0 9 20l4.500-8L5 12z" fill="#2f9e58" />
          <path d="M9 20a10 10 0 0 0 9.800-14H10l3.800 6.500z" fill="#f7cb3c" />
          <circle cx="10" cy="10" r="4.800" fill="#fff" />
          <circle cx="10" cy="10" r="3.700" fill="#4585e8" />
        </Icon>
      </Task>
      <Task label="Meeting" open><Flower /></Task>
      <Task label="Notepad" open>
        <Icon w={22} h={20}>
          <path d="m7 1 11-1 4 4-4 16-17-2z" fill="#7eb6cc" />
          <path d="m8 2 9-1-4 17-11-1z" fill="#bfe0ea" />
          <path d="m18 4 3 1-4 14-3-1z" fill="#4a8299" />
        </Icon>
      </Task>
      <Task label="Power BI" open>
        <Icon w={22} h={24}>
          <path d="M0 0h22v24H0z" fill="#f2c811" />
          <rect x="4" y="7" width="14" height="10" rx="1.500" stroke="#3a3200" strokeWidth="1.300" />
          <path d="M7.500 17v-3M10 17v-5M12.500 17v-4M15 17v-7" stroke="#3a3200" strokeWidth="1.500" />
        </Icon>
      </Task>
      <Task label="Webinar" open><Flower /></Task>
      <Task label="PowerPoint" open active><PptMark size={19} /></Task>
      <div className="ml-auto flex items-center">
        <button aria-label="People" className="mr-[20px]">
          <Icon w={14} h={15}>
            <circle cx="9.500" cy="3.500" r="2.500" stroke="#ddd" strokeWidth="1.200" />
            <circle cx="4.500" cy="7" r="2.500" stroke="#ddd" strokeWidth="1.200" />
            <path d="M.6 14c.5-6 7.500-6 8 0M8 7.500c3-1.500 5 .5 5.300 3.500" stroke="#ddd" strokeWidth="1.200" />
          </Icon>
        </button>
        <button aria-label="Show hidden icons" className="mr-[10px]">
          <Icon w={12} h={7}><path d="m1 6 5-5 5 5" stroke="#ddd" strokeWidth="1.400" /></Icon>
        </button>
        <Icon w={15} h={12} className="mr-[9px]">
          <path d="M5.500 3.500h8v6H4M14.500 5v3" stroke="#ddd" strokeWidth="1.200" />
          <path d="M7 5h5v3H7zM1 3h4v3H1z" fill="#ddd" />
          <path d="M2 0v3M4 0v3M3 6v6" stroke="#ddd" />
        </Icon>
        <Icon w={13} h={12} className="mr-2">
          <path d="M.7 12A11.300 11.300 0 0 1 12 .7M4 12a8 8 0 0 1 8-8M7 12a5 5 0 0 1 5-5" stroke="#aaa" strokeWidth="1.200" />
          <path d="M9 12a3 3 0 0 1 3-3v3z" fill="#ddd" />
        </Icon>
        <Icon w={16} h={13} className="mr-[9px]">
          <path d="M.5 4.500h2L6 1v11L2.500 8.500h-2z" stroke="#ddd" />
          <path d="M8 4.500c1 1 1 3 0 4M10.500 3c2 2 2 5 0 7M13 1.500c3 3 3 7 0 10" stroke="#ddd" />
        </Icon>
        <span className="w-[22px] text-center text-[11px] leading-[16px]">ENG<br />IN</span>
        <time className="ml-[10px] w-[52px] text-center text-[11px] leading-[16px] whitespace-nowrap">8:22 AM<br />6/15/2018</time>
        <button aria-label="Notifications" className="mr-[19px] ml-[15px]">
          <Icon w={16} h={16}>
            <path d="M0 0h15v11H5l-2 3v-3H0z" fill="#fff" />
            <path d="M2.500 3h10M2.500 5.500h10M2.500 8h7" stroke="#03080f" />
            <circle cx="12.500" cy="12" r="3" fill="#03080f" stroke="#fff" />
          </Icon>
        </button>
        <span className="mr-[3px] h-[39px] w-px bg-[#555]" />
      </div>
    </div>
  );
}

export default function App() {
  return (
    <div className="flex h-screen flex-col overflow-hidden bg-white font-['Open_Sans','Noto_Sans',sans-serif]">
      <header className="shrink-0">
        <TitleBar />
        <Tabs />
        <Ribbon />
      </header>
      <div className="flex min-h-0 flex-1 bg-linear-to-b from-[#fdfdfd] to-[#ededed]">
        <Panel />
        <Workspace />
      </div>
      <StatusBar />
      <Taskbar />
    </div>
  );
}
